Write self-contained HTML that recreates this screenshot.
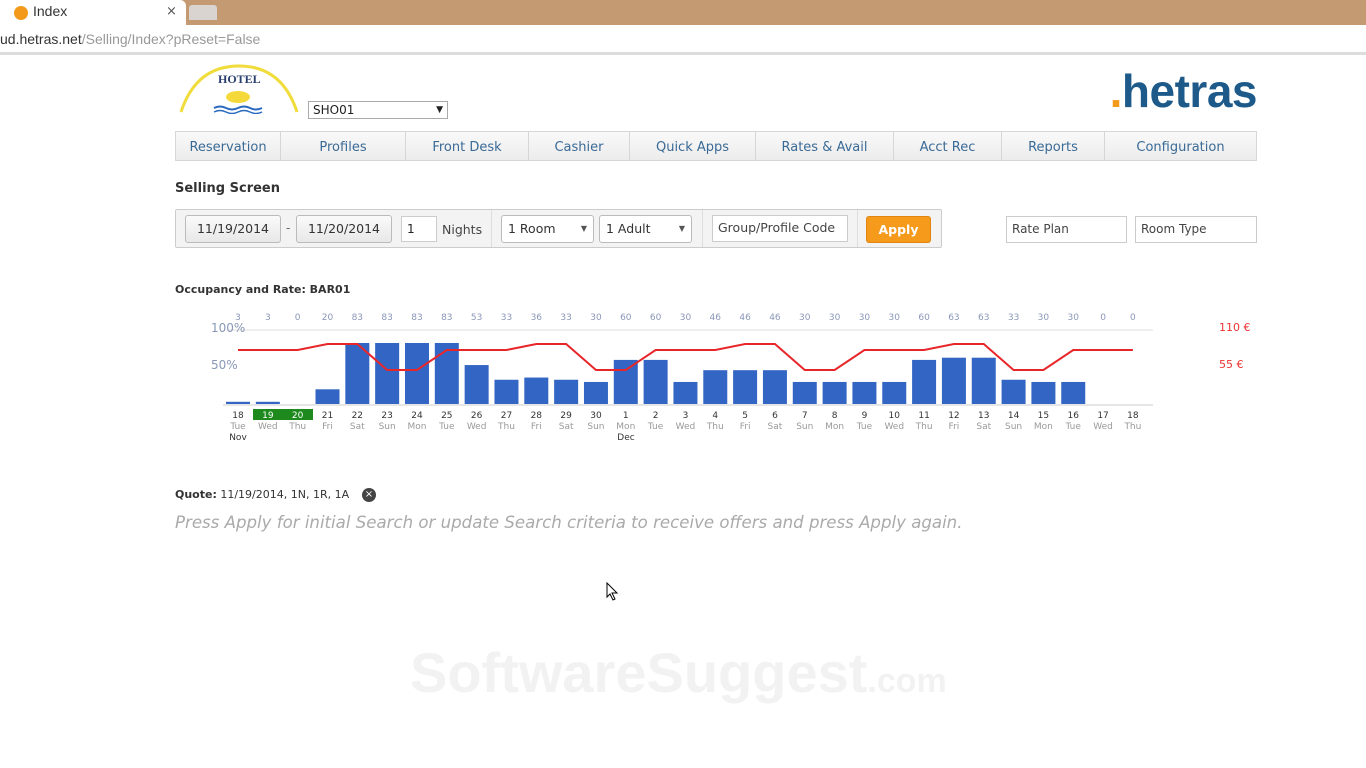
<!DOCTYPE html>
<html><head><meta charset="utf-8"><style>
*{margin:0;padding:0;box-sizing:border-box}
body{width:1366px;height:768px;position:relative;overflow:hidden;background:#fff;font-family:"DejaVu Sans","Liberation Sans",sans-serif;}
.a{position:absolute}
.tab{position:absolute;top:131px;height:30px;border:1px solid #d6d6d6;background:linear-gradient(#f9f9f9,#ececec);color:#3a6a96;font-size:13px;text-align:center;line-height:31px}
.btn{position:absolute;height:28px;border:1px solid #bbb;border-radius:3px;background:linear-gradient(#fafafa,#e8e8e8);font-size:12.5px;color:#333;text-align:center;line-height:26px}
.inp{position:absolute;height:26px;border:1px solid #ccc;background:#fff;font-size:12px;color:#444;line-height:24px;padding-left:5px}
</style></head><body>
<div class="a" style="left:0;top:0;width:1366px;height:25px;background:#c39a72"></div>
<div class="a" style="left:0;top:0;width:186px;height:26px;background:#fff;border-radius:0 6px 0 0"></div>
<div class="a" style="left:14px;top:6px;width:14px;height:14px;border-radius:50%;background:#f39a1a"></div>
<div class="a" style="left:33px;top:3px;font-size:14px;color:#333;font-family:'Liberation Sans',sans-serif">Index</div>
<div class="a" style="left:166px;top:4px;font-size:13px;color:#555">×</div>
<div class="a" style="left:189px;top:5px;width:28px;height:15px;background:#d9d4d0;border-radius:3px 3px 0 0"></div>
<div class="a" style="left:0;top:25px;width:1366px;height:30px;background:#fff;border-bottom:3px solid #ddd"></div>
<div class="a" style="left:0;top:31px;font-size:14px;color:#333;font-family:'Liberation Sans',sans-serif">ud.hetras.net<span style="color:#999">/Selling/Index?pReset=False</span></div>
<svg class="a" style="left:176px;top:62px" width="126" height="52"><path d="M5 50 Q20 4 63 4 Q106 4 121 50" fill="none" stroke="#f0dc3a" stroke-width="3"/><text x="42" y="21" font-family="Liberation Serif" font-weight="bold" font-size="12" fill="#2b3f6e">HOTEL</text><ellipse cx="62" cy="35" rx="12" ry="6" fill="#f5d93a"/><path d="M38 46 q6-3 12 0 t12 0 t12 0 t12 0" stroke="#2a6ac0" stroke-width="2" fill="none"/><path d="M38 50 q6-3 12 0 t12 0 t12 0 t12 0" stroke="#2a6ac0" stroke-width="1.5" fill="none"/></svg>
<div class="a" style="left:308px;top:101px;width:140px;height:18px;border:1px solid #aaa;font-size:12px;line-height:16px;padding-left:4px;color:#222">SHO01<span style="position:absolute;right:4px;font-size:9px">▼</span></div>
<div class="a" style="right:109px;top:64px;font-size:46px;font-weight:bold;color:#1d5a8a;font-family:'Liberation Sans',sans-serif;letter-spacing:-0.5px"><span style="color:#f39a1a">.</span>hetras</div>
<div class="tab" style="left:175px;width:106px">Reservation</div>
<div class="tab" style="left:280px;width:126px">Profiles</div>
<div class="tab" style="left:405px;width:124px">Front Desk</div>
<div class="tab" style="left:528px;width:102px">Cashier</div>
<div class="tab" style="left:629px;width:127px">Quick Apps</div>
<div class="tab" style="left:755px;width:139px">Rates &amp; Avail</div>
<div class="tab" style="left:893px;width:109px">Acct Rec</div>
<div class="tab" style="left:1001px;width:104px">Reports</div>
<div class="tab" style="left:1104px;width:153px">Configuration</div>
<div class="a" style="left:175px;top:181px;font-size:13px;font-weight:bold;color:#333">Selling Screen</div>
<div class="a" style="left:175px;top:209px;width:767px;height:39px;border:1px solid #ccc;background:#f3f3f3;border-radius:2px"></div>
<div class="a" style="left:491px;top:210px;width:1px;height:37px;background:#ddd"></div>
<div class="a" style="left:702px;top:210px;width:1px;height:37px;background:#ddd"></div>
<div class="a" style="left:857px;top:210px;width:1px;height:37px;background:#ddd"></div>
<div class="btn" style="left:185px;top:215px;width:96px">11/19/2014</div>
<div class="a" style="left:286px;top:221px;font-size:12px;color:#666">-</div>
<div class="btn" style="left:296px;top:215px;width:96px">11/20/2014</div>
<div class="inp" style="left:401px;top:216px;width:36px;height:26px;color:#222">1</div>
<div class="a" style="left:442px;top:222px;font-size:12.5px;color:#444">Nights</div>
<div class="btn" style="left:501px;top:215px;width:93px;text-align:left;padding-left:6px;background:#fff">1 Room<span style="position:absolute;right:6px;font-size:8px;color:#555">▼</span></div>
<div class="btn" style="left:599px;top:215px;width:93px;text-align:left;padding-left:6px;background:#fff">1 Adult<span style="position:absolute;right:6px;font-size:8px;color:#555">▼</span></div>
<div class="inp" style="left:712px;top:215px;width:136px;height:27px;font-size:12.5px">Group/Profile Code</div>
<div class="a" style="left:866px;top:216px;width:65px;height:27px;background:#f59a1a;border:1px solid #e08510;border-radius:3px;color:#fff;font-size:12.5px;font-weight:bold;text-align:center;line-height:25px">Apply</div>
<div class="inp" style="left:1006px;top:216px;width:121px;height:27px">Rate Plan</div>
<div class="inp" style="left:1135px;top:216px;width:122px;height:27px">Room Type</div>
<div class="a" style="left:175px;top:283px;font-size:11px;font-weight:bold;color:#333">Occupancy and Rate: BAR01</div>
<svg id="ch" class="a" style="left:0;top:0" width="1366" height="450"></svg>
<div class="a" style="left:175px;top:488px;font-size:11px;color:#333"><b>Quote:</b> 11/19/2014, 1N, 1R, 1A</div>
<div class="a" style="left:362px;top:488px;width:14px;height:14px;border-radius:50%;background:#444;color:#fff;font-size:10px;line-height:14px;text-align:center">×</div>
<div class="a" style="left:175px;top:513px;font-size:16.6px;font-style:italic;color:#aaa">Press Apply for initial Search or update Search criteria to receive offers and press Apply again.</div>
<div class="a" style="left:410px;top:640px;font-size:56px;font-weight:bold;color:#f2f2f2;font-family:'Liberation Sans',sans-serif">SoftwareSuggest<span style="font-size:34px">.com</span></div>
<svg class="a" style="left:606px;top:582px" width="14" height="20"><path d="M1 1 L1 15 L4 12 L7 18 L9 17 L6 11 L11 11 Z" fill="#fff" stroke="#000"/></svg>
<script>
var v=[3,3,0,20,83,83,83,83,53,33,36,33,30,60,60,30,46,46,46,30,30,30,30,60,63,63,33,30,30,0,0];
var r=[350,350,350,344,344,370,370,350,350,350,344,344,370,370,350,350,350,344,344,370,370,350,350,350,344,344,370,370,350,350,350];
var dn=['Mon','Tue','Wed','Thu','Fri','Sat','Sun'];
var s='<line x1="228" y1="330" x2="1153" y2="330" stroke="#ddd"/><line x1="223" y1="405" x2="1153" y2="405" stroke="#ccc"/>';
s+='<text x="211" y="332" font-size="12" fill="#8a97b8">100%</text><text x="211" y="369" font-size="12" fill="#8a97b8">50%</text>';
s+='<text x="1219" y="331" font-size="11" fill="#e33">110 €</text><text x="1219" y="368" font-size="11" fill="#e33">55 €</text>';
s+='<rect x="253" y="409" width="60" height="11" fill="#1e8a1e"/>';
var pts=[];
for(var i=0;i<31;i++){var cx=238+29.83*i;var h=v[i]*0.735;
if(h>0)s+='<rect x="'+(cx-12)+'" y="'+(404-h)+'" width="24" height="'+h+'" fill="#3366c4"/>';
s+='<text x="'+cx+'" y="320" font-size="9" fill="#8a97b8" text-anchor="middle">'+v[i]+'</text>';
var d=i<13?18+i:i-12;var w=dn[(1+i)%7];
var g=(i==1||i==2);
s+='<text x="'+cx+'" y="418" font-size="9" fill="'+(g?'#fff':'#333')+'" text-anchor="middle">'+d+'</text>';
s+='<text x="'+cx+'" y="429" font-size="9" fill="#999" text-anchor="middle">'+w+'</text>';
pts.push(cx+','+r[i]);}
s+='<text x="238" y="440" font-size="9" fill="#333" text-anchor="middle">Nov</text><text x="626" y="440" font-size="9" fill="#333" text-anchor="middle">Dec</text>';
s+='<polyline points="'+pts.join(' ')+'" fill="none" stroke="#e8262a" stroke-width="2"/>';
document.getElementById('ch').innerHTML=s;
</script>
</body></html>
